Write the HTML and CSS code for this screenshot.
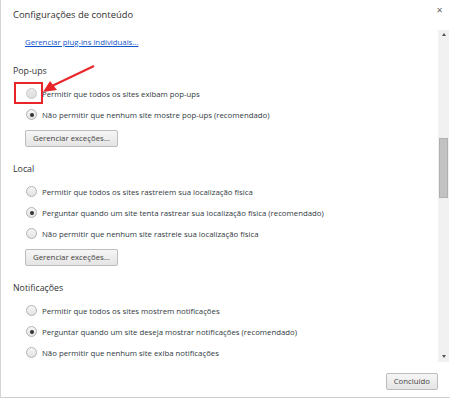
FILE: index.html
```html
<!DOCTYPE html>
<html lang="pt">
<head>
<meta charset="utf-8">
<title>Configurações de conteúdo</title>
<link rel="stylesheet" href="styles.css">
</head>
<body>
<div class="dialog">
  <div class="header">
    <h1 class="title">Configurações de conteúdo</h1>
    <span class="close">&#x2715;</span>
  </div>
  <div class="main">
    <div class="content">
      <a class="link" href="#">Gerenciar plug-ins individuais...</a>

      <section class="group">
        <h2 class="heading">Pop-ups</h2>
        <label class="row"><span class="radio highlight"></span><span class="label">Permitir que todos os sites exibam pop-ups</span></label>
        <label class="row"><span class="radio checked"></span><span class="label">Não permitir que nenhum site mostre pop-ups (recomendado)</span></label>
        <button class="btn">Gerenciar exceções...</button>
      </section>

      <section class="group">
        <h2 class="heading">Local</h2>
        <label class="row"><span class="radio"></span><span class="label">Permitir que todos os sites rastreiem sua localização física</span></label>
        <label class="row"><span class="radio checked"></span><span class="label">Perguntar quando um site tenta rastrear sua localização física (recomendado)</span></label>
        <label class="row"><span class="radio"></span><span class="label">Não permitir que nenhum site rastreie sua localização física</span></label>
        <button class="btn">Gerenciar exceções...</button>
      </section>

      <section class="group">
        <h2 class="heading">Notificações</h2>
        <label class="row"><span class="radio"></span><span class="label">Permitir que todos os sites mostrem notificações</span></label>
        <label class="row"><span class="radio checked"></span><span class="label">Perguntar quando um site deseja mostrar notificações (recomendado)</span></label>
        <label class="row"><span class="radio"></span><span class="label">Não permitir que nenhum site exiba notificações</span></label>
      </section>
    </div>
    <div class="scrollbar">
      <span class="arrow up"></span>
      <div class="track"><div class="thumb"></div></div>
      <span class="arrow down"></span>
    </div>
  </div>
  <div class="footer">
    <button class="btn done">Concluído</button>
  </div>

  <div class="highlight-box"></div>
  <svg class="annot-arrow" width="100" height="40" viewBox="0 0 100 40">
    <line x1="93" y1="3" x2="51" y2="23" stroke="#e8262a" stroke-width="2"/>
    <polygon points="42,29 49,18 56,27" fill="#e8262a"/>
  </svg>
</div>
</body>
</html>
```
FILE: styles.css
```css
* { box-sizing: border-box; }
html, body { margin: 0; padding: 0; background: #fff; }
body {
  font-family: "Open Sans", "Noto Sans", "DejaVu Sans", sans-serif;
  color: #303942;
  width: 450px;
  height: 400px;
  overflow: hidden;
}
.dialog {
  position: relative;
  width: 450px;
  height: 398px;
  border-left: 1px solid #d4d4d4;
  border-bottom: 1px solid #cfcfcf;
  display: flex;
  flex-direction: column;
}
.header {
  height: 30px;
  display: flex;
  align-items: flex-start;
  justify-content: space-between;
  padding: 6px 7px 0 12px;
}
.title {
  margin: 0;
  font-size: 9.4px;
  font-weight: normal;
  line-height: 18px;
  color: #333;
}
.close {
  font-size: 8px;
  line-height: 9px;
  color: #666;
  margin-top: -1px;
}
.main {
  height: 332px;
  display: flex;
}
.content {
  flex: 1;
  overflow: hidden;
  padding: 4px 0 0 12px;
}
.link {
  display: block;
  margin-left: 12px;
  font-size: 7.8px;
  line-height: 16px;
  color: #1155cc;
  text-decoration: underline;
}
.group { margin-top: 13px; }
.group + .group { margin-top: 14px; }
.heading {
  margin: 0 0 4px;
  font-size: 8.8px;
  font-weight: normal;
  line-height: 16px;
  color: #333;
}
.row {
  display: flex;
  align-items: center;
  height: 21px;
  padding-left: 13px;
  font-size: 7.8px;
  color: #303942;
  white-space: nowrap;
}
.radio {
  width: 11px;
  height: 11px;
  border-radius: 50%;
  border: 1px solid #b4b4b4;
  background: linear-gradient(#f6f6f6, #e2e2e2);
  margin-right: 5px;
  flex: none;
  position: relative;
}
.radio.highlight {
  border-color: #c8c8c8;
  background: linear-gradient(#ececec, #dcdcdc);
}
.radio.checked::after {
  content: "";
  position: absolute;
  left: 2.5px;
  top: 2.5px;
  width: 4px;
  height: 4px;
  border-radius: 50%;
  background: #333;
}
.btn {
  display: block;
  margin: 5px 0 0 12px;
  height: 17px;
  padding: 0 7px;
  font-family: inherit;
  font-size: 7.8px;
  line-height: 15px;
  color: #444;
  border: 1px solid #bcbcbc;
  border-radius: 2px;
  background: linear-gradient(#f6f6f6, #e4e4e4);
}
.scrollbar {
  width: 11px;
  margin-right: 1px;
  background: #f1f1f1;
  display: flex;
  flex-direction: column;
  align-items: center;
}
.arrow {
  width: 0; height: 0;
  border-left: 2px solid transparent;
  border-right: 2px solid transparent;
  margin: 3px 0;
}
.arrow.up { border-bottom: 3px solid #555; }
.arrow.down { border-top: 3px solid #555; margin-top: auto; margin-bottom: 4px; }
.track { width: 100%; flex: 1; position: relative; }
.thumb {
  margin: 99px 1px 0;
  height: 60px;
  background: #c2c2c2;
  border: 1px solid #b0b0b0;
}
.footer {
  flex: 1;
  display: flex;
  justify-content: flex-end;
  align-items: flex-start;
  padding: 11px 12px 0 0;
}
.btn.done {
  margin: 0;
  height: 17px;
  padding: 0 7px;
}
.highlight-box {
  position: absolute;
  left: 13px;
  top: 82px;
  width: 29px;
  height: 22px;
  border: 2px solid #e8262a;
}
.annot-arrow {
  position: absolute;
  left: 0;
  top: 63px;
}
```
